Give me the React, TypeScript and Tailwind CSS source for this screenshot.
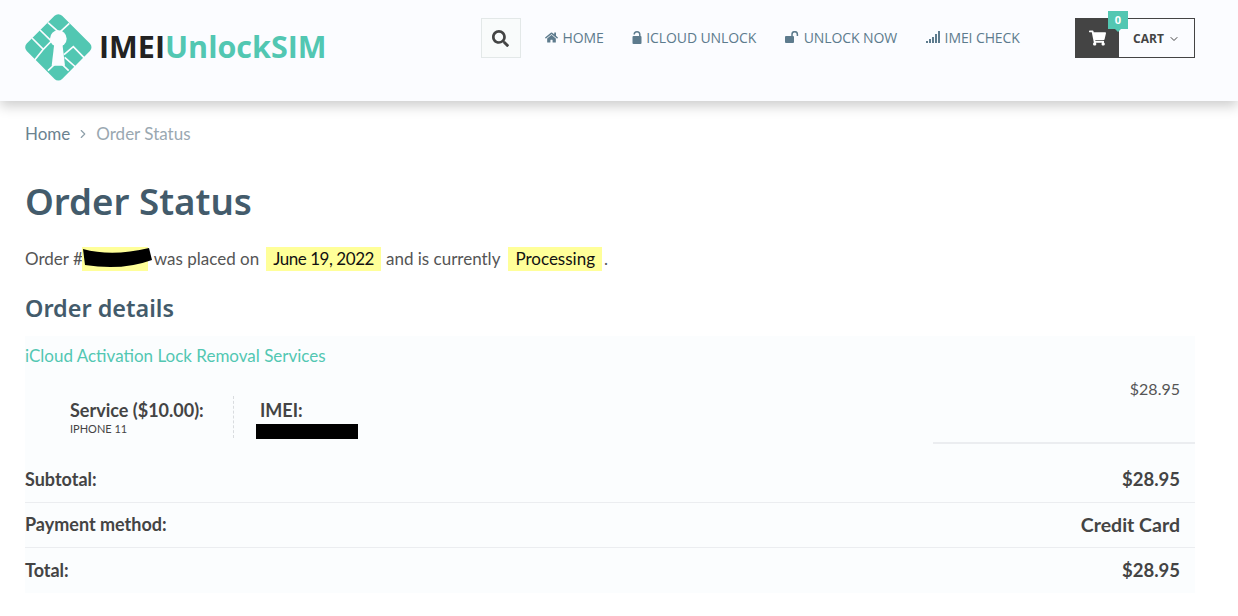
import React from "react"
import { FaHome, FaSearch, FaShoppingCart } from "react-icons/fa"
import { FiChevronDown, FiChevronRight } from "react-icons/fi"

const body = "font-['Lato','Noto_Sans',sans-serif]"

function Logo() {
  return (
    <svg width="78" height="76" viewBox="0 0 234 228" className="shrink-0 ml-[-5px] mt-[2px]">
      <rect x="40" y="37" width="150" height="150" rx="16" fill="#52c7b2" transform="rotate(45 115 112)" />
      <g stroke="#fbfcff" strokeWidth="5" fill="none">
        <path d="M84 38 L118 68 L148 40" />
        <path d="M60 60 L95 94" />
        <path d="M36 84 L70 118 L97 90 M70 118 L44 150" />
        <path d="M84 182 L105 162 M125 162 L146 182" />
        <path d="M132 134 L160 110 L197 148 M134 142 L170 174" />
      </g>
      <circle cx="115" cy="86" r="25" fill="#fbfcff" />
      <path d="M103 100 L95 167 H135 L127 100 Z" fill="#fbfcff" />
    </svg>
  )
}

function SignalIcon() {
  return (
    <svg width="14" height="12" viewBox="0 0 14 12" fill="#5d7b8d">
      <rect x="0" y="10" width="2" height="2" />
      <rect x="3" y="8" width="2" height="4" />
      <rect x="6" y="6" width="2" height="6" />
      <rect x="9" y="3" width="2" height="9" />
      <rect x="12" y="0" width="2" height="12" />
    </svg>
  )
}

function LockIcon() {
  return (
    <svg width="10" height="13" viewBox="0 0 10 13" fill="none">
      <rect x="0.5" y="5" width="9" height="8" rx="1" fill="#5d7b8d" />
      <path d="M2.2 3.6 a2.8 2.8 0 0 1 5.6 0 V6" stroke="#5d7b8d" strokeWidth="1.5" />
    </svg>
  )
}

function UnlockIcon() {
  return (
    <svg width="14" height="12" viewBox="0 0 14 12" fill="none">
      <rect x="0" y="5" width="9" height="7" rx="1" fill="#5d7b8d" />
      <path d="M7 6 V3.4 a2.7 2.7 0 0 1 5.4 0 V5" stroke="#5d7b8d" strokeWidth="1.5" />
    </svg>
  )
}

function NavItem({ icon, label, gap }: { icon: React.ReactNode; label: string; gap: string }) {
  return (
    <a className={`flex items-center text-[14px] text-[#5d7b8d] tracking-[-0.1px] whitespace-nowrap ${gap}`}>
      {icon}
      {label}
    </a>
  )
}

function TotalRow({ label, value, border, valueSize }: { label: string; value: string; border?: boolean; valueSize: string }) {
  return (
    <div className={`flex h-[45px] items-center justify-between pr-[15px] font-bold text-[#444] ${border ? "border-b border-[#ebedf0]" : ""}`}>
      <span className="text-[18px] mt-[-1px]">{label}</span>
      <span className={valueSize}>{value}</span>
    </div>
  )
}

export default function App() {
  return (
    <div className={`min-h-[616px] bg-white ${body}`}>
      <header className="flex h-[101px] bg-[#fbfcff] pl-[25px] pr-[43px] pt-[13px] shadow-[0_5px_12px_rgba(0,0,0,0.2)] font-['Open_Sans',sans-serif]">
        <div className="flex h-[68px] items-center gap-[1px]">
          <Logo />
          <span className="text-[30.5px] font-bold">
            <span className="text-[#222]">IMEI</span>
            <span className="text-[#52c7b2]">UnlockSIM</span>
          </span>
        </div>
        <div className="ml-[154px] mt-[5px] flex h-[40px] items-center">
          <button className="flex h-[40px] w-[40px] items-center justify-center border border-[#e3e8e8] bg-[#f9fbfb] text-[#444]">
            <FaSearch className="h-[17px] w-[17px]" />
          </button>
          <nav className="ml-[24px] mt-[-2px] flex items-center gap-[28.5px]">
            <NavItem gap="gap-[5px]" icon={<FaHome className="h-[13px] w-[13px]" />} label="HOME" />
            <NavItem gap="gap-[4px]" icon={<LockIcon />} label="ICLOUD UNLOCK" />
            <NavItem gap="gap-[5px]" icon={<UnlockIcon />} label="UNLOCK NOW" />
            <NavItem gap="gap-[5px]" icon={<SignalIcon />} label="IMEI CHECK" />
          </nav>
        </div>
        <div className="relative ml-auto mt-[5px] flex h-[40px] w-[120px] border border-[#444]">
          <div className="flex w-[43px] items-center justify-center bg-[#444] text-white">
            <FaShoppingCart className="h-[16px] w-[17px]" />
          </div>
          <div className="flex flex-1 items-center justify-center gap-[4px] pt-[1px] text-[12px] font-bold text-[#444]">
            CART <FiChevronDown className="h-[12px] w-[12px]" />
          </div>
          <span className="absolute left-[32px] top-[-8px] flex h-[18px] w-[20px] items-center justify-center bg-[#52c7b2] text-[11px] font-bold text-white">
            0
            <span className="absolute bottom-[-3px] left-[7px] h-0 w-0 border-x-[3px] border-t-[3px] border-x-transparent border-t-[#52c7b2]" />
          </span>
        </div>
      </header>

      <main className="pl-[25px] pr-[43px]">
        <div className="flex items-center gap-[6px] pt-[21px] text-[17px] leading-[24px] text-[#6b8290]">
          <span>Home</span>
          <FiChevronRight className="h-[14px] w-[14px] text-[#8fa0aa]" />
          <span className="text-[#9aa8b1]">Order Status</span>
        </div>

        <h1 className="mt-[30px] text-[36.7px] font-semibold leading-[50px] text-[#435b6b] font-['Noto_Sans',sans-serif]">Order Status</h1>

        <p className="mt-[21px] flex h-[24px] items-center whitespace-nowrap text-[17px] text-[#555]">
          <span>Order #</span>
          <span className="relative h-[24px] w-[66px] bg-[#ffff99] ml-[-1px]">
            <svg width="72" height="24" viewBox="0 0 72 24" className="absolute left-0 top-0">
              <path d="M1 2 Q30 10 67 1 L70 13 Q40 24 3 18 Z" fill="#000" />
            </svg>
          </span>
          <span className="ml-[6px]">was placed on</span>
          <span className="ml-[7px] flex h-[24px] items-center bg-[#ffff99] px-[7px] tracking-[-0.45px] text-[#111]">June 19, 2022</span>
          <span className="ml-[5px]">and is currently</span>
          <span className="ml-[8px] flex h-[24px] items-center bg-[#ffff99] px-[7px] text-[#111]">Processing</span>
          <span className="ml-[2px]">.</span>
        </p>

        <h2 className="mt-[21px] text-[23.4px] font-semibold leading-[32px] text-[#435b6b] font-['Noto_Sans',sans-serif]">Order details</h2>

        <section className="mt-[12px] bg-[#fbfdfe]">
          <a className="block pt-[8px] text-[17px] leading-[24px] text-[#52c7b2]">iCloud Activation Lock Removal Services</a>
          <div className="flex h-[76px] justify-between">
            <div className="flex pl-[45px] pt-[32px]">
              <div className="w-[163px]">
                <div className="text-[18px] font-bold leading-[20px] text-[#444]">Service ($10.00):</div>
                <div className="mt-[2px] text-[11px] leading-[14px] text-[#444]">IPHONE 11</div>
              </div>
              <div className="h-[42px] border-l border-dashed border-[#d9dcdf] pl-[26px] mt-[-4px]">
                <div className="pt-[4px] text-[18px] font-bold leading-[20px] text-[#444]">IMEI:</div>
                <div className="ml-[-4px] mt-[4px] h-[15px] w-[102px] bg-black" />
              </div>
            </div>
            <div className="flex w-[262px] flex-col items-end border-b-2 border-[#ebedf0] pr-[15px] pt-[9px]">
              <span className="text-[16px] leading-[24px] text-[#555]">$28.95</span>
            </div>
          </div>
          <div className="pt-[14px]">
            <TotalRow label="Subtotal:" value="$28.95" valueSize="text-[18.5px]" border />
            <TotalRow label="Payment method:" value="Credit Card" valueSize="text-[19.5px]" border />
            <TotalRow label="Total:" value="$28.95" valueSize="text-[18.5px]" />
          </div>
        </section>
      </main>
    </div>
  )
}
